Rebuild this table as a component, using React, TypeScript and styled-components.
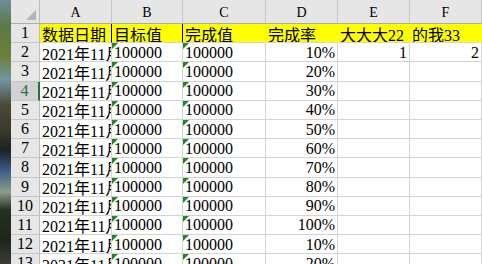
import styled, { createGlobalStyle } from 'styled-components';

const GlobalStyle = createGlobalStyle`
    html, body {
        margin: 0;
        padding: 0;
        background: #ffffff;
        overflow: hidden;
    }
`;

const ROW_H = 19.2;
const COLS = ['A', 'B', 'C', 'D', 'E', 'F'];
const header = ['数据日期', '目标值', '完成值', '完成率', '大大大22', '的我33'];
const rates = ['10%', '20%', '30%', '40%', '50%', '60%', '70%', '80%', '90%', '100%', '10%', '20%'];

const Sheet = styled.div`
    display: grid;
    grid-template-columns: 11px 29px 72px 71px 83px 72px 72px 72px;
    grid-template-rows: 24px repeat(13, ${ROW_H}px);
    width: 482px;
    height: 264px;
    overflow: hidden;
    font-family: "Liberation Serif", "Noto Sans CJK SC", serif;
    color: #000000;
`;

// bit of desktop wallpaper showing at the left edge
const Strip = styled.div`
    grid-column: 1;
    grid-row: 1 / span 14;
    background: linear-gradient(
        to bottom,
        #6f8e9c 0px,
        #5d7a45 25px,
        #6b8038 55px,
        #7393a2 80px,
        #4a4a36 105px,
        #3b3a2c 130px,
        #1c2222 150px,
        #3b5a86 170px,
        #8d9c8a 192px,
        #22321f 210px,
        #1e261c 240px,
        #3a3e34 264px
    );
`;

const Corner = styled.div`
    position: relative;
    background: #e6e6e6;
    border-right: 1px solid #bcbcbc;
    border-bottom: 1px solid #ababab;
    box-sizing: border-box;

    &::after {
        content: '';
        position: absolute;
        right: 3px;
        bottom: 3px;
        width: 0;
        height: 0;
        border-left: 10px solid transparent;
        border-bottom: 10px solid #b4b4b4;
    }
`;

const ColHead = styled.div`
    background: #e6e6e6;
    border-right: 1px solid #c6c6c6;
    border-bottom: 1px solid #ababab;
    box-sizing: border-box;
    display: flex;
    align-items: center;
    justify-content: center;
    font-size: 14px;
    padding-top: 2px;
`;

const RowHead = styled.div<{ $active?: boolean }>`
    background: ${p => (p.$active ? '#d2d2d2' : '#e6e6e6')};
    color: ${p => (p.$active ? '#217346' : '#000000')};
    border-right: ${p => (p.$active ? '2px solid #217346' : '1px solid #bcbcbc')};
    border-bottom: 1px solid #c6c6c6;
    box-sizing: border-box;
    display: flex;
    align-items: center;
    justify-content: center;
    font-size: 16px;
`;

const Cell = styled.div<{ $right?: boolean; $fill?: boolean; $edge?: boolean; $flag?: boolean }>`
    position: relative;
    background: ${p => (p.$fill ? '#ffff00' : '#ffffff')};
    border-right: 1px solid ${p => (p.$edge ? '#000000' : p.$fill ? '#ffff00' : '#d4d4d4')};
    border-bottom: 1px solid #d4d4d4;
    box-sizing: border-box;
    display: flex;
    align-items: center;
    justify-content: ${p => (p.$right ? 'flex-end' : 'flex-start')};
    padding: 1px 2px 0 2px;
    font-size: 16px;
    white-space: nowrap;
    overflow: hidden;

    /* green "number stored as text" marker */
    &::before {
        content: '';
        display: ${p => (p.$flag ? 'block' : 'none')};
        position: absolute;
        left: 0;
        top: 0;
        width: 0;
        height: 0;
        border-top: 6px solid #1f8a1f;
        border-right: 6px solid transparent;
    }
`;

function Row({ n, rate }: { n: number; rate: string }) {
    return (
        <>
            <RowHead $active={n === 4}>{n}</RowHead>
            <Cell>2021年11月</Cell>
            <Cell $flag>100000</Cell>
            <Cell $flag>100000</Cell>
            <Cell $right>{rate}</Cell>
            <Cell $right>{n === 2 ? '1' : ''}</Cell>
            <Cell $right>{n === 2 ? '2' : ''}</Cell>
        </>
    );
}

export default function App() {
    return (
        <>
            <GlobalStyle />
            <Sheet>
                <Strip />
                <Corner />
                {COLS.map(c => (
                    <ColHead key={c}>{c}</ColHead>
                ))}

                <RowHead>1</RowHead>
                {header.map((h, i) => (
                    <Cell key={h} $fill $edge={i === 0 || i === 1}>
                        {h}
                    </Cell>
                ))}

                {rates.map((r, i) => (
                    <Row key={i} n={i + 2} rate={r} />
                ))}
            </Sheet>
        </>
    );
}
